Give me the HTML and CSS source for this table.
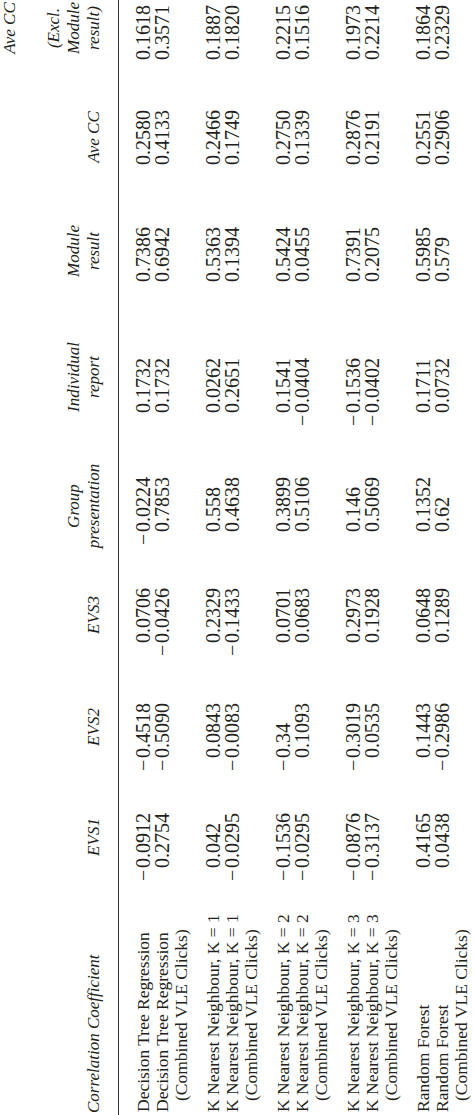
FILE: index.html
```html
<!DOCTYPE html>
<html>
<head>
<meta charset="utf-8">
<link rel="stylesheet" href="styles.css">
</head>
<body>
<div class="page">
<div class="rot">
<table class="cc">
<colgroup>
<col class="w-label"><col class="w-evs1"><col class="w-evs2"><col class="w-evs3"><col class="w-grp"><col class="w-ind"><col class="w-mod"><col class="w-ave"><col class="w-exc">
</colgroup>
<thead>
<tr>
<th class="h-label">Correlation Coefficient</th>
<th>EVS1</th>
<th>EVS2</th>
<th>EVS3</th>
<th>Group<br>presentation</th>
<th>Individual<br>report</th>
<th>Module<br>result</th>
<th>Ave CC</th>
<th><div class="h-top">Ave CC</div>(Excl.<br>Module<br>result)</th>
</tr>
</thead>
<tbody>
<tr>
<td class="lab"><div>Decision Tree Regression</div><div>Decision Tree Regression</div><div class="ind">(Combined VLE Clicks)</div></td>
<td><div><span class="neg">−</span>0.0912</div><div>0.2754</div></td>
<td><div><span class="neg">−</span>0.4518</div><div><span class="neg">−</span>0.5090</div></td>
<td><div>0.0706</div><div><span class="neg">−</span>0.0426</div></td>
<td><div><span class="neg">−</span>0.0224</div><div>0.7853</div></td>
<td><div>0.1732</div><div>0.1732</div></td>
<td><div>0.7386</div><div>0.6942</div></td>
<td><div>0.2580</div><div>0.4133</div></td>
<td><div>0.1618</div><div>0.3571</div></td>
</tr>
<tr>
<td class="lab"><div>K Nearest Neighbour, K = 1</div><div>K Nearest Neighbour, K = 1</div><div class="ind">(Combined VLE Clicks)</div></td>
<td><div>0.042</div><div><span class="neg">−</span>0.0295</div></td>
<td><div>0.0843</div><div><span class="neg">−</span>0.0083</div></td>
<td><div>0.2329</div><div><span class="neg">−</span>0.1433</div></td>
<td><div>0.558</div><div>0.4638</div></td>
<td><div>0.0262</div><div>0.2651</div></td>
<td><div>0.5363</div><div>0.1394</div></td>
<td><div>0.2466</div><div>0.1749</div></td>
<td><div>0.1887</div><div>0.1820</div></td>
</tr>
<tr>
<td class="lab"><div>K Nearest Neighbour, K = 2</div><div>K Nearest Neighbour, K = 2</div><div class="ind">(Combined VLE Clicks)</div></td>
<td><div><span class="neg">−</span>0.1536</div><div><span class="neg">−</span>0.0295</div></td>
<td><div><span class="neg">−</span>0.34</div><div>0.1093</div></td>
<td><div>0.0701</div><div>0.0683</div></td>
<td><div>0.3899</div><div>0.5106</div></td>
<td><div>0.1541</div><div><span class="neg">−</span>0.0404</div></td>
<td><div>0.5424</div><div>0.0455</div></td>
<td><div>0.2750</div><div>0.1339</div></td>
<td><div>0.2215</div><div>0.1516</div></td>
</tr>
<tr>
<td class="lab"><div>K Nearest Neighbour, K = 3</div><div>K Nearest Neighbour, K = 3</div><div class="ind">(Combined VLE Clicks)</div></td>
<td><div><span class="neg">−</span>0.0876</div><div><span class="neg">−</span>0.3137</div></td>
<td><div><span class="neg">−</span>0.3019</div><div>0.0535</div></td>
<td><div>0.2973</div><div>0.1928</div></td>
<td><div>0.146</div><div>0.5069</div></td>
<td><div><span class="neg">−</span>0.1536</div><div><span class="neg">−</span>0.0402</div></td>
<td><div>0.7391</div><div>0.2075</div></td>
<td><div>0.2876</div><div>0.2191</div></td>
<td><div>0.1973</div><div>0.2214</div></td>
</tr>
<tr>
<td class="lab"><div>Random Forest</div><div>Random Forest</div><div class="ind">(Combined VLE Clicks)</div></td>
<td><div>0.4165</div><div>0.0438</div></td>
<td><div>0.1443</div><div><span class="neg">−</span>0.2986</div></td>
<td><div>0.0648</div><div>0.1289</div></td>
<td><div>0.1352</div><div>0.62</div></td>
<td><div>0.1711</div><div>0.0732</div></td>
<td><div>0.5985</div><div>0.579</div></td>
<td><div>0.2551</div><div>0.2906</div></td>
<td><div>0.1864</div><div>0.2329</div></td>
</tr>
</tbody>
</table>
</div>
</div>
</body>
</html>
```
FILE: styles.css
```css
html, body {
  margin: 0;
  padding: 0;
  background: #ffffff;
}
body {
  width: 474px;
  height: 1115px;
  overflow: hidden;
}
.page {
  width: 474px;
  height: 1115px;
  overflow: hidden;
}
.rot {
  width: 1128px;
  height: 474px;
  transform-origin: 0 0;
  transform: translateY(1115px) rotate(-90deg);
}
.cc {
  width: 1128px;
  table-layout: fixed;
  border-collapse: collapse;
  border-spacing: 0;
  font-family: "Liberation Serif", "Times New Roman", serif;
  color: #231f20;
}
.w-label { width: 220px; }
.w-evs1 { width: 116px; }
.w-evs2 { width: 104px; }
.w-evs3 { width: 120px; }
.w-grp { width: 98px; }
.w-ind { width: 160px; }
.w-mod { width: 92px; }
.w-ave { width: 136px; }
.w-exc { width: 82px; }

.cc th {
  height: 104px;
  padding: 0 0 14px 0;
  vertical-align: bottom;
  font-style: italic;
  font-weight: normal;
  font-size: 17px;
  line-height: 20px;
  text-align: center;
  white-space: nowrap;
  border-bottom: 1.5px solid #333333;
}
.cc th.h-label {
  text-align: left;
  padding-left: 2px;
}
.h-top {
  margin-bottom: 24px;
}

.cc td {
  vertical-align: top;
  padding: 13px 0 0 0;
  font-size: 20px;
  line-height: 19px;
  white-space: nowrap;
  text-align: left;
}
.cc tbody tr:first-child td {
  padding-top: 15px;
}
.cc td.lab {
  font-size: 17.5px;
  padding-left: 3px;
}
.ind {
  padding-left: 11px;
}
.neg {
  display: inline-block;
  width: 13px;
  margin-left: -13px;
}
.cc tbody td:nth-child(2) { padding-left: 27px; }
.cc tbody td:nth-child(3) { padding-left: 21px; }
.cc tbody td:nth-child(4) { padding-left: 32px; }
.cc tbody td:nth-child(5) { padding-left: 23px; }
.cc tbody td:nth-child(6) { padding-left: 44px; }
.cc tbody td:nth-child(7) { padding-left: 15px; }
.cc tbody td:nth-child(8) { padding-left: 40px; }
.cc tbody td:nth-child(9) { padding-left: 9px; }
```
